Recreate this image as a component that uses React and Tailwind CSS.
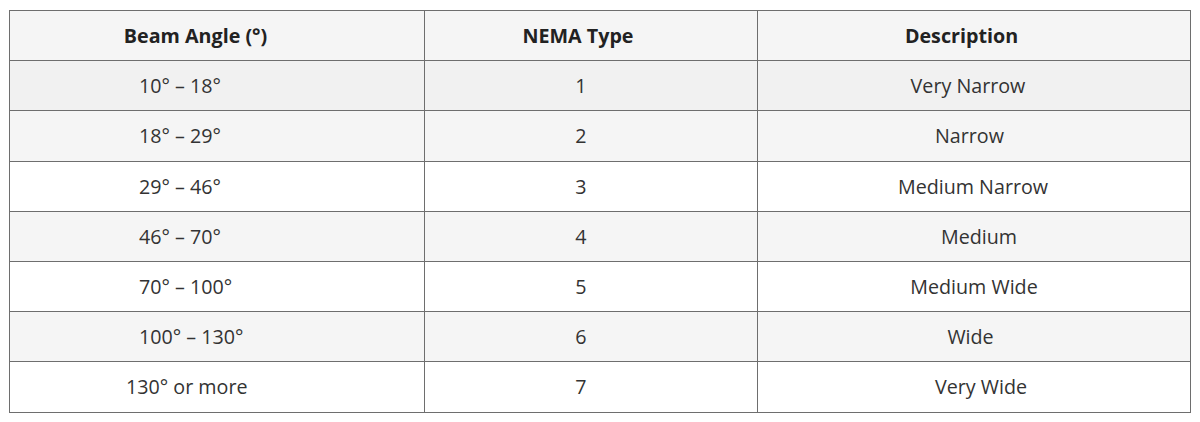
import React from "react";

const rows = [
  { a: "10° – 18°", b: "1", c: "Very Narrow", bg: "bg-[#f1f1f1]", h: "h-[50px]", pl: "pl-[129px]", cp: "pr-[12px]" },
  { a: "18° – 29°", b: "2", c: "Narrow", bg: "bg-[#f5f5f5]", h: "h-[51px]", pl: "pl-[129px]", cp: "pr-[9px]" },
  { a: "29° – 46°", b: "3", c: "Medium Narrow", bg: "bg-white", h: "h-[50px]", pl: "pl-[129px]", cp: "pr-[2px]" },
  { a: "46° – 70°", b: "4", c: "Medium", bg: "bg-[#f5f5f5]", h: "h-[50px]", pl: "pl-[129px]", cp: "pl-[10px]" },
  { a: "70° – 100°", b: "5", c: "Medium Wide", bg: "bg-white", h: "h-[50px]", pl: "pl-[129px]", cp: "" },
  { a: "100° – 130°", b: "6", c: "Wide", bg: "bg-[#f5f5f5]", h: "h-[50px]", pl: "pl-[129px]", cp: "pr-[7px]" },
  { a: "130° or more", b: "7", c: "Very Wide", bg: "bg-white", h: "h-[50px]", pl: "pl-[116px]", cp: "pl-[14px]" },
];

export default function App() {
  return (
    <div
      className="w-[1200px] h-[422px] bg-white pl-[9px] pt-[10px]"
      style={{ fontFamily: '"Open Sans", "Noto Sans", sans-serif' }}
    >
      <div className="w-[1182px] border border-[#6e6e6e] text-[19.7px] text-[#333333]">
        <div className="grid grid-cols-[415px_333px_432px] h-[50px] bg-[#f5f5f5] border-b border-[#6e6e6e] font-bold text-[#222222]">
          <div className="flex items-center justify-center pr-[43px] border-r border-[#6e6e6e]">Beam Angle (°)</div>
          <div className="flex items-center justify-center pr-[26px] border-r border-[#6e6e6e]">NEMA Type</div>
          <div className="flex items-center justify-center pr-[25px]">Description</div>
        </div>
        {rows.map((r, i) => (
          <div
            key={i}
            className={`grid grid-cols-[415px_333px_432px] ${r.h} ${r.bg} ${i < rows.length - 1 ? "border-b border-[#6e6e6e]" : ""}`}
          >
            <div className={`flex items-center ${r.pl} border-r border-[#6e6e6e]`}>{r.a}</div>
            <div className="flex items-center justify-center pr-[20px] border-r border-[#6e6e6e]">{r.b}</div>
            <div className={`flex items-center justify-center ${r.cp}`}>{r.c}</div>
          </div>
        ))}
      </div>
    </div>
  );
}
